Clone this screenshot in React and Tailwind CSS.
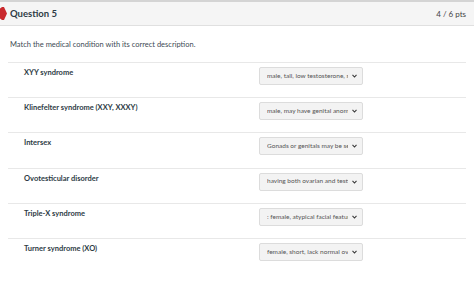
const rows = [
  { label: 'XYY syndrome', value: 'male, tall, low testosterone, st' },
  { label: 'Klinefelter syndrome (XXY, XXXY)', value: 'male, may have genital anoma' },
  { label: 'Intersex', value: 'Gonads or genitals may be se' },
  { label: 'Ovotesticular disorder', value: 'having both ovarian and testic' },
  { label: 'Triple-X syndrome', value: ': female, atypical facial featur' },
  { label: 'Turner syndrome (XO)', value: 'female, short, lack normal ova' },
];

function Chevron() {
  return (
    <svg width="5" height="4" viewBox="0 0 5 4" className="shrink-0">
      <path d="M0.5 0.8 L2.5 3 L4.5 0.8" fill="none" stroke="#3a3a3a" strokeWidth="1.1" />
    </svg>
  );
}

function FakeSelect({ value }) {
  return (
    <div className="w-[104px] h-[18px] flex items-center bg-[#f3f3f3] border border-[#dcdcdc] rounded-[2px] pl-[7px] pr-[5px] gap-[4px]">
      <span className="flex-1 overflow-hidden whitespace-nowrap text-[6.5px] text-[#555] leading-none">{value}</span>
      <Chevron />
    </div>
  );
}

export default function App() {
  return (
    <div className="w-[474px] h-[283px] bg-white overflow-hidden text-[#2d3b45]" style={{ fontFamily: 'Lato, "Open Sans", sans-serif' }}>
      {/* Header */}
      <div className="relative h-[26px] border-t-2 border-[#d4d4d4] border-b border-b-[#e0e0e0] bg-[#f5f5f5] flex items-center justify-between pl-[10px] pr-[8px]">
        <svg className="absolute left-0 top-[5px]" width="7" height="13" viewBox="0 0 7 13">
          <polygon points="0,1.5 2,0 4,0 7,6.5 4,13 2,13 0,11.5" fill="#c9292d" />
        </svg>
        <span className="text-[9.5px] font-bold leading-none">Question 5</span>
        <span className="text-[8px] text-[#444] leading-none">4 / 6 pts</span>
      </div>

      {/* Body */}
      <div className="px-[8px]">
        <p className="mt-[14px] pl-[2px] text-[7.5px] leading-[10px] text-[#3d4a54]">
          Match the medical condition with its correct description.
        </p>
        <div className="mt-[12px]">
          {rows.map((r) => (
            <div key={r.label} className="h-[35.2px] border-t border-[#e8e8e8] flex items-start pt-[4px]">
              <div className="w-[251px] pl-[16px] pt-[1px] text-[7.5px] font-bold leading-[9px]">{r.label}</div>
              <FakeSelect value={r.value} />
            </div>
          ))}
        </div>
      </div>
    </div>
  );
}
